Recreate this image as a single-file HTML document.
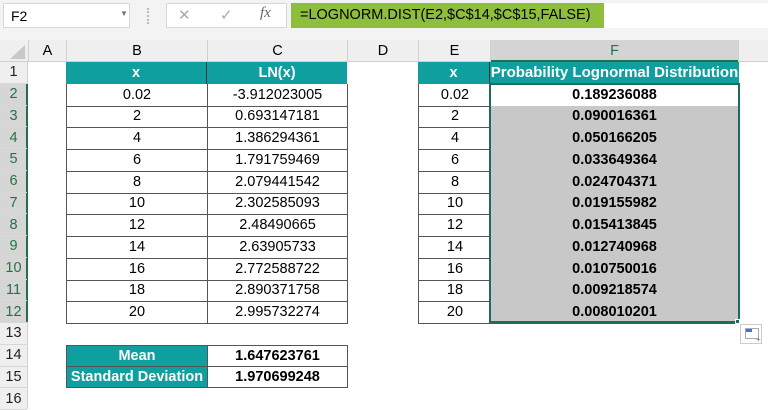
<!DOCTYPE html>
<html><head><style>
body{margin:0;width:768px;height:409px;overflow:hidden;background:#fff;font-family:"Liberation Sans",sans-serif;position:relative}
.a{position:absolute;box-sizing:border-box}
.c{position:absolute;box-sizing:border-box;display:flex;align-items:center;justify-content:center;font-size:14.5px;color:#000}
.t{background:#0f9f9f;color:#fff;font-weight:bold}
.b{font-weight:bold}
</style></head><body>
<div class="a" style="left:0;top:0;width:768px;height:40px;background:#f3f3f3"></div>
<div class="a" style="left:3px;top:3px;width:127px;height:25px;background:#fff;border:1px solid #d8d8d8;font-size:14px;padding:4px 0 0 7px">F2<span style="position:absolute;left:116px;top:5px;font-size:8px;color:#777">▼</span></div>
<div class="a" style="left:147px;top:8px;width:2px;height:16px;border-left:2px dotted #bbb"></div>
<div class="a" style="left:166px;top:3px;width:121px;height:25px;background:#fff;border:1px solid #d8d8d8;color:#aaa;font-size:15px">
<span style="position:absolute;left:11px;top:2px">✕</span><span style="position:absolute;left:53px;top:2px">✓</span><span style="position:absolute;left:93px;top:1px;font-family:'Liberation Serif',serif;font-style:italic;color:#666">fx</span></div>
<div class="a" style="left:291px;top:3px;width:313px;height:25px;background:#8dbf3d;font-size:14.5px;padding:4px 0 0 9px">=LOGNORM.DIST(E2,$C$14,$C$15,FALSE)</div>
<div class="a" style="left:604px;top:3px;width:164px;height:25px;background:#fff"></div>
<div class="a" style="left:0;top:40px;width:768px;height:22px;background:#efefef;border-bottom:1px solid #d0d0d0"></div>
<div class="a" style="left:10px;top:45px;width:0;height:0;border-left:15px solid transparent;border-bottom:14px solid #c8c8c8"></div>
<div class="a" style="left:490px;top:40px;width:249px;height:22px;background:#d4d4d4;border-bottom:2px solid #217346"></div>
<div class="c" style="left:28px;top:40px;width:38px;height:22px;border-left:1px solid #d0d0d0">A</div>
<div class="c" style="left:66px;top:40px;width:141px;height:22px;border-left:1px solid #d0d0d0">B</div>
<div class="c" style="left:207px;top:40px;width:140px;height:22px;border-left:1px solid #d0d0d0">C</div>
<div class="c" style="left:347px;top:40px;width:71px;height:22px;border-left:1px solid #d0d0d0">D</div>
<div class="c" style="left:418px;top:40px;width:72px;height:22px;border-left:1px solid #d0d0d0">E</div>
<div class="c" style="left:490px;top:40px;width:249px;height:22px;border-left:1px solid #d0d0d0;border-right:1px solid #d0d0d0;color:#217346">F</div>
<div class="a" style="left:0;top:62px;width:28px;height:347px;background:#efefef;border-right:1px solid #d0d0d0"></div>
<div class="a" style="left:0;top:84px;width:28px;height:238px;background:#d6d6d6;border-right:2px solid #217346"></div>
<div id="rows"></div>
<script>
var H=21.75,T=62,out='';
for(var i=1;i<=16;i++){var y=T+(i-1)*H;out+='<div class="c" style="left:0;top:'+y+'px;width:27px;height:'+H+'px;border-bottom:1px solid #d8d8d8;color:'+(i>=2&&i<=12?'#217346':'#222')+'">'+i+'</div>';}
var B=['0.02','2','4','6','8','10','12','14','16','18','20'];
var C=['-3.912023005','0.693147181','1.386294361','1.791759469','2.079441542','2.302585093','2.48490665','2.63905733','2.772588722','2.890371758','2.995732274'];
var F=['0.189236088','0.090016361','0.050166205','0.033649364','0.024704371','0.019155982','0.015413845','0.012740968','0.010750016','0.009218574','0.008010201'];
out+='<div class="c t" style="left:66px;top:62px;width:141px;height:'+H+'px;border-right:1px solid #333">x</div>';
out+='<div class="c t" style="left:207px;top:62px;width:140px;height:'+H+'px">LN(x)</div>';
out+='<div class="c t" style="left:418px;top:62px;width:72px;height:'+H+'px;border-right:1px solid #333">x</div>';
out+='<div class="c t" style="left:490px;top:62px;width:249px;height:'+H+'px;font-size:15px;white-space:nowrap">Probability Lognormal Distribution</div>';
for(var k=0;k<11;k++){var y=T+(k+1)*H;
var bd='border-left:1px solid #555;border-bottom:1px solid #555;';
out+='<div class="c" style="left:66px;top:'+y+'px;width:141px;height:'+(H+1)+'px;'+bd+'">'+B[k]+'</div>';
out+='<div class="c" style="left:207px;top:'+y+'px;width:141px;height:'+(H+1)+'px;'+bd+'border-right:1px solid #555">'+C[k]+'</div>';
out+='<div class="c" style="left:418px;top:'+y+'px;width:73px;height:'+(H+1)+'px;'+bd+'">'+B[k]+'</div>';
out+='<div class="c b" style="left:490px;top:'+y+'px;width:249px;height:'+(H+1)+'px;border-bottom:1px solid #555;background:'+(k?'#c8c8c8':'#fff')+'">'+F[k]+'</div>';}
out+='<div class="a" style="left:489px;top:83px;width:251px;height:240px;border:2px solid #1f6b5b"></div>';
out+='<div class="a" style="left:735px;top:319px;width:5px;height:5px;background:#1f6b5b;border:1px solid #fff"></div>';
var y14=T+13*H,y15=T+14*H;
out+='<div class="c t" style="left:66px;top:'+y14+'px;width:141px;height:'+H+'px;border:1px solid #555;border-right:none">Mean</div>';
out+='<div class="c t" style="left:66px;top:'+y15+'px;width:141px;height:'+H+'px;border:1px solid #555;border-top:none;border-right:none;white-space:nowrap">Standard Deviation</div>';
out+='<div class="c b" style="left:207px;top:'+y14+'px;width:141px;height:'+H+'px;border:1px solid #555">1.647623761</div>';
out+='<div class="c b" style="left:207px;top:'+y15+'px;width:141px;height:'+H+'px;border:1px solid #555;border-top:none">1.970699248</div>';
document.getElementById('rows').innerHTML=out;
</script>
<div class="a" style="left:740px;top:324px;width:22px;height:20px;background:#fff;border:1px solid #ccc">
<div class="a" style="left:4px;top:3px;width:7px;height:4px;background:#2f7be0"></div>
<div class="a" style="left:4px;top:3px;width:14px;height:11px;border:1px solid #aaa"></div>
<div class="a" style="left:15px;top:10px;font-size:8px;color:#777">+</div></div>
</body></html>
